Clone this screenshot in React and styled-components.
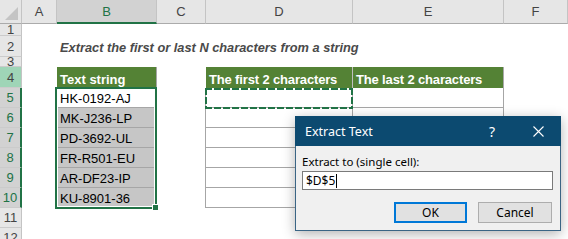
import React from 'react';
import styled, { createGlobalStyle, css } from 'styled-components';

const GREEN = '#217346';
const TABLE_LINE = '#a6a6a6';

const Global = createGlobalStyle`
  html, body { margin: 0; padding: 0; background: #fff; }
  body { font-family: "Liberation Sans", Arial, sans-serif; }
`;

const Page = styled.div`
  position: relative;
  width: 568px;
  height: 239px;
  overflow: hidden;
  background: #fff;
`;

const Sheet = styled.div`
  display: grid;
  grid-template-columns: 22px 35px 100px 49px 147px 151px 1fr;
  grid-template-rows: 24px 12px 21px 10px 21px repeat(8, 20px);
`;

const placed = css`
  grid-row: ${p => p.$r};
  grid-column: ${p => p.$c};
`;

const headerBase = css`
  ${placed}
  box-sizing: border-box;
  display: flex;
  align-items: center;
  justify-content: center;
  overflow: hidden;
  font-family: "Liberation Sans", Arial, sans-serif;
  font-size: 13px;
`;

const Corner = styled.div`
  ${headerBase}
  background: #e6e6e6;
  border-right: 1px solid #c4c4c4;
  border-bottom: 1px solid #ababab;
  align-items: flex-end;
  justify-content: flex-end;
  padding: 0 3px 3px 0;
`;

const ColHeader = styled.div`
  ${headerBase}
  background: ${p => (p.$selected ? '#d2d2d2' : '#e6e6e6')};
  color: ${p => (p.$selected ? GREEN : '#444')};
  border-right: 1px solid #c4c4c4;
  border-bottom: ${p => (p.$selected ? `2px solid ${GREEN}` : '1px solid #ababab')};
`;

const RowHeader = styled.div`
  ${headerBase}
  background: ${p =>
    p.$state === 'active' ? '#9fd5b7' : p.$state === 'selected' ? '#d2d2d2' : '#e6e6e6'};
  color: ${p => (p.$state === 'selected' ? GREEN : '#444')};
  border-right: ${p => (p.$state === 'selected' ? `2px solid ${GREEN}` : '1px solid #c4c4c4')};
  border-bottom: 1px solid #cbcbcb;
`;

const Cell = styled.div`
  ${placed}
  box-sizing: border-box;
  display: flex;
  align-items: flex-end;
  padding: 0 3px 1px;
  font-size: 13px;
  line-height: 15px;
  white-space: nowrap;
  color: #000;
  min-width: 0;
`;

const Title = styled(Cell)`
  font-style: italic;
  font-weight: bold;
  font-size: 12.8px;
  color: #4a4a4a;
  padding-bottom: 2px;
`;

const HeadCell = styled(Cell)`
  background: #548235;
  color: #fff;
  font-weight: bold;
  letter-spacing: ${p => (p.$tight ? '-0.15px' : '0')};
  border-right: 1px solid ${p => p.$sep || TABLE_LINE};
`;

const DataCell = styled(Cell)`
  background: ${p => (p.$tone === 'shaded' ? '#c6c6c6' : '#fff')};
  border-bottom: 1px solid ${TABLE_LINE};
  border-right: 1px solid ${TABLE_LINE};
  box-shadow: ${p => (p.$edge ? `-1px 0 0 ${TABLE_LINE}` : 'none')};
`;

const Selection = styled.div`
  ${placed}
  position: relative;
  margin: -1px 0 -1px -2px;
  border: 2px solid ${GREEN};
  box-shadow: inset 0 0 0 1px #fff;
  pointer-events: none;
  z-index: 2;
`;

const FillHandle = styled.div`
  position: absolute;
  right: -4px;
  bottom: -4px;
  width: 5px;
  height: 5px;
  background: ${GREEN};
  border: 1px solid #fff;
`;

const dash = (dir) =>
  `repeating-linear-gradient(${dir}, ${GREEN} 0 7px, transparent 7px 9px)`;

const CopyMarquee = styled.div`
  ${placed}
  margin: 0 0 -1px -1px;
  z-index: 2;
  background-image: ${dash('to right')}, ${dash('to right')}, ${dash('to bottom')}, ${dash('to bottom')};
  background-size: 100% 2px, 100% 2px, 2px 100%, 2px 100%;
  background-position: 0 0, 0 100%, 0 0, 100% 0;
  background-repeat: no-repeat;
`;

/* Dialog */
const Dialog = styled.div`
  position: absolute;
  left: 295px;
  top: 116px;
  width: 266px;
  box-sizing: border-box;
  background: #f0f0f0;
  border: 1px solid #3a6585;
  border-top: none;
  box-shadow: 0 3px 12px rgba(0, 0, 0, 0.3);
  display: flex;
  flex-direction: column;
  font-family: "Noto Sans", "Open Sans", sans-serif;
  z-index: 5;
`;

const TitleBar = styled.div`
  height: 30px;
  margin: 0 -1px;
  background: #0c4a70;
  color: #fff;
  display: flex;
  align-items: center;
  padding-left: 10px;
  font-size: 12.5px;
`;

const TitleText = styled.div`
  flex: 1;
`;

const TitleButton = styled.div`
  width: 46px;
  height: 30px;
  display: flex;
  align-items: center;
  justify-content: center;
  font-size: 14px;
`;

const Body = styled.div`
  display: flex;
  flex-direction: column;
  padding: 9px 7px 7px 6px;
`;

const Label = styled.div`
  font-size: 11.5px;
  line-height: 14px;
  color: #000;
`;

const Input = styled.div`
  margin-top: 2px;
  height: 19px;
  box-sizing: border-box;
  border: 1px solid #7a7a7a;
  background: #fff;
  display: flex;
  align-items: center;
  padding-left: 3px;
  font-size: 12px;
  color: #000;
`;

const Caret = styled.span`
  display: inline-block;
  width: 1px;
  height: 14px;
  background: #000;
  margin-left: 1px;
`;

const Buttons = styled.div`
  margin-top: 12px;
  display: flex;
  justify-content: flex-end;
  gap: 11px;
  padding-right: 1px;
`;

const Button = styled.div`
  box-sizing: border-box;
  width: ${p => (p.$primary ? 73 : 74)}px;
  height: 21px;
  background: #e1e1e1;
  border: ${p => (p.$primary ? '2px solid #0078d7' : '1px solid #adadad')};
  display: flex;
  align-items: center;
  justify-content: center;
  font-size: 12px;
  color: #000;
`;

const CloseIcon = () => (
  <svg width="11" height="11" viewBox="0 0 11 11">
    <path d="M0.5 0.5 L10.5 10.5 M10.5 0.5 L0.5 10.5" stroke="#fff" strokeWidth="1.1" fill="none" />
  </svg>
);

const CornerMark = () => (
  <svg width="13" height="13" viewBox="0 0 13 13">
    <polygon points="13,0 13,13 0,13" fill="#c4c4c4" />
  </svg>
);

const columns = ['A', 'B', 'C', 'D', 'E', 'F'];
const strings = ['HK-0192-AJ', 'MK-J236-LP', 'PD-3692-UL', 'FR-R501-EU', 'AR-DF23-IP', 'KU-8901-36'];

export default function App() {
  const cells = [];
  // header row
  cells.push(
    <Corner key="corner" $r={1} $c={1}>
      <CornerMark />
    </Corner>
  );
  columns.forEach((c, i) => {
    cells.push(
      <ColHeader key={'h' + c} $r={1} $c={i + 2} $selected={c === 'B'}>
        {c}
      </ColHeader>
    );
  });

  for (let n = 1; n <= 12; n++) {
    const r = n + 1;
    const state = n === 4 ? 'active' : n >= 5 && n <= 10 ? 'selected' : 'normal';
    cells.push(
      <RowHeader key={'r' + n} $r={r} $c={1} $state={state}>
        {n}
      </RowHeader>
    );
  }

  cells.push(
    <Title key="title" $r={3} $c="3 / -1">
      Extract the first or last N characters from a string
    </Title>
  );

  cells.push(
    <HeadCell key="b4" $r={5} $c={3}>
      Text string
    </HeadCell>,
    <HeadCell key="d4" $r={5} $c={5} $sep="#bfbfbf" $tight>
      The first 2 characters
    </HeadCell>,
    <HeadCell key="e4" $r={5} $c={6} $sep="#a9a9a9" $tight>
      The last 2 characters
    </HeadCell>
  );

  strings.forEach((s, i) => {
    const r = i + 6;
    cells.push(
      <DataCell key={'b' + r} $r={r} $c={3} $tone={i === 0 ? 'plain' : 'shaded'}>
        {s}
      </DataCell>,
      <DataCell key={'d' + r} $r={r} $c={5} $edge />,
      <DataCell key={'e' + r} $r={r} $c={6} />
    );
  });

  return (
    <Page>
      <Global />
      <Sheet>
        {cells}
        <Selection $r="6 / 12" $c={3}>
          <FillHandle />
        </Selection>
        <CopyMarquee $r={6} $c={5} />
      </Sheet>
      <Dialog>
        <TitleBar>
          <TitleText>Extract Text</TitleText>
          <TitleButton>?</TitleButton>
          <TitleButton>
            <CloseIcon />
          </TitleButton>
        </TitleBar>
        <Body>
          <Label>Extract to (single cell):</Label>
          <Input>
            $D$5
            <Caret />
          </Input>
          <Buttons>
            <Button $primary>OK</Button>
            <Button>Cancel</Button>
          </Buttons>
        </Body>
      </Dialog>
    </Page>
  );
}
